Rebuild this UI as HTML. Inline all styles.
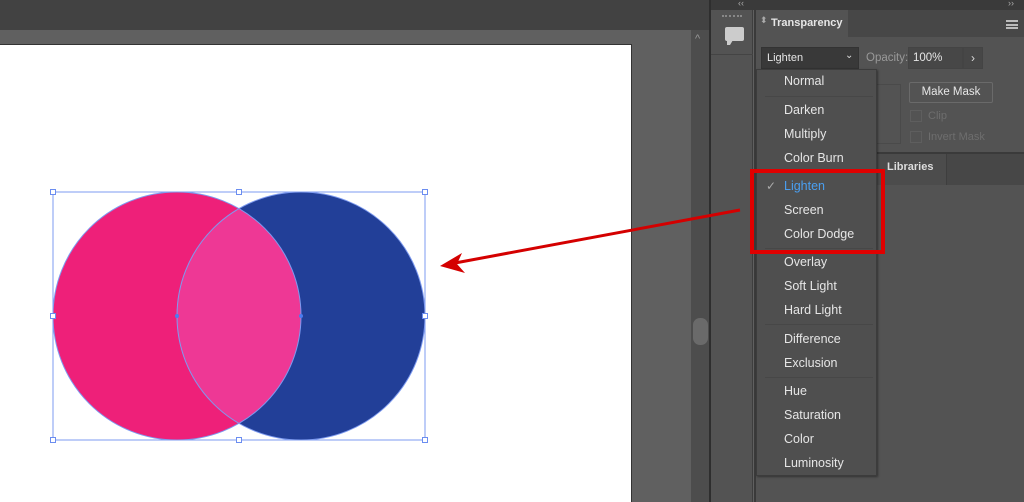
<!DOCTYPE html>
<html><head><style>
*{margin:0;padding:0;box-sizing:border-box}
body{width:1024px;height:502px;overflow:hidden;background:#606060;font-family:"Liberation Sans",sans-serif;position:relative}
.a{position:absolute}
.mi{position:absolute;left:784px;font-size:12.5px;color:#e6e6e6}
.sep{position:absolute;left:765px;width:108px;height:1px;background:#474747}
</style></head><body>
<div class="a" style="left:0;top:0;width:710px;height:30px;background:#424242"></div>
<div class="a" style="left:0;top:44px;width:632px;height:458px;background:#fff;border-top:1px solid #333;border-right:1px solid #333"></div>
<div class="a" style="left:691px;top:30px;width:18px;height:472px;background:#4d4d4d"></div>
<div class="a" style="left:693px;top:318px;width:15px;height:27px;background:#6a6a6a;border-radius:7px"></div>
<div class="a" style="left:695px;top:33px;color:#999;font-size:11px">^</div>
<div class="a" style="left:709px;top:0;width:2px;height:502px;background:#2e2e2e"></div>
<div class="a" style="left:711px;top:0;width:313px;height:10px;background:#3a3a3a"></div>
<div class="a" style="left:738px;top:-2px;color:#aaa;font-size:9px">‹‹</div>
<div class="a" style="left:1008px;top:-2px;color:#aaa;font-size:9px">››</div>
<div class="a" style="left:711px;top:10px;width:42px;height:492px;background:#535353;border-right:1px solid #3e3e3e"></div>
<div class="a" style="left:711px;top:10px;width:42px;height:45px;border-bottom:1px solid #444"></div>
<div class="a" style="left:722px;top:15px;width:20px;height:2px;border-top:2px dotted #888"></div>
<div class="a" style="left:725px;top:27px;width:19px;height:14px;background:#ccc;border-radius:2px"></div>
<div class="a" style="left:727px;top:40px;width:0;height:0;border-left:3px solid #ccc;border-right:3px solid transparent;border-top:5px solid #ccc"></div>
<div class="a" style="left:754px;top:10px;width:2px;height:492px;background:#3a3a3a"></div>
<div class="a" style="left:756px;top:10px;width:268px;height:27px;background:#474747"></div>
<div class="a" style="left:756px;top:10px;width:92px;height:27px;background:#535353"></div>
<div class="a" style="left:760px;top:15px;color:#aaa;font-size:9px">⬍</div>
<div class="a" style="left:771px;top:17px;color:#e6e6e6;font-size:11px;font-weight:bold">Transparency</div>
<div class="a" style="left:1006px;top:20px;width:12px;height:9px;border-top:2px solid #bbb;border-bottom:2px solid #bbb"></div>
<div class="a" style="left:1006px;top:24px;width:12px;height:2px;background:#bbb"></div>
<div class="a" style="left:756px;top:37px;width:268px;height:115px;background:#535353"></div>
<div class="a" style="left:756px;top:152px;width:268px;height:33px;background:#474747;border-top:2px solid #3a3a3a"></div>
<div class="a" style="left:877px;top:154px;width:70px;height:31px;background:#4c4c4c;border-right:1px solid #3e3e3e"></div>
<div class="a" style="left:887px;top:161px;color:#ddd;font-size:11px;font-weight:bold">Libraries</div>
<div class="a" style="left:756px;top:185px;width:268px;height:317px;background:#535353"></div>
<div class="a" style="left:761px;top:47px;width:98px;height:22px;background:#393939;border:1px solid #333"></div>
<div class="a" style="left:767px;top:52px;color:#e6e6e6;font-size:11px">Lighten</div>
<div class="a" style="left:845px;top:50px;color:#ddd;font-size:10px">⌄</div>
<div class="a" style="left:866px;top:52px;color:#999;font-size:11.5px">Opacity:</div>
<div class="a" style="left:908px;top:47px;width:55px;height:22px;background:#474747;border:1px solid #444"></div>
<div class="a" style="left:913px;top:52px;color:#e6e6e6;font-size:11.5px">100%</div>
<div class="a" style="left:963px;top:47px;width:20px;height:22px;background:#474747;border:1px solid #444;color:#ddd;font-size:12px;text-align:center;line-height:20px">›</div>
<div class="a" style="left:855px;top:84px;width:46px;height:60px;border:1px solid #4a4a4a"></div>
<div class="a" style="left:909px;top:82px;width:84px;height:21px;border:1px solid #6a6a6a;border-radius:2px;color:#e6e6e6;font-size:11.5px;text-align:center;line-height:19px">Make Mask</div>
<div class="a" style="left:910px;top:110px;width:12px;height:12px;border:1px solid #5e5e5e"></div>
<div class="a" style="left:928px;top:110px;color:#6e6e6e;font-size:11px">Clip</div>
<div class="a" style="left:910px;top:131px;width:12px;height:12px;border:1px solid #5e5e5e"></div>
<div class="a" style="left:928px;top:131px;color:#6e6e6e;font-size:11px">Invert Mask</div>
<div class="a" style="left:756px;top:69px;width:121px;height:407px;background:#4f4f4f;border:1px solid #3c3c3c;box-shadow:1px 1px 2px rgba(0,0,0,.4)"></div>
<div class="mi" style="top:74px">Normal</div>
<div class="sep" style="top:96px"></div>
<div class="mi" style="top:103px">Darken</div>
<div class="mi" style="top:127px">Multiply</div>
<div class="mi" style="top:151px">Color Burn</div>
<div class="sep" style="top:172px"></div>
<div class="a" style="left:766px;top:179px;color:#aaa;font-size:12px">✓</div>
<div class="mi" style="top:179px;color:#4a9ff0">Lighten</div>
<div class="mi" style="top:203px">Screen</div>
<div class="mi" style="top:227px">Color Dodge</div>
<div class="sep" style="top:248px"></div>
<div class="mi" style="top:255px">Overlay</div>
<div class="mi" style="top:279px">Soft Light</div>
<div class="mi" style="top:303px">Hard Light</div>
<div class="sep" style="top:324px"></div>
<div class="mi" style="top:332px">Difference</div>
<div class="mi" style="top:356px">Exclusion</div>
<div class="sep" style="top:377px"></div>
<div class="mi" style="top:384px">Hue</div>
<div class="mi" style="top:408px">Saturation</div>
<div class="mi" style="top:432px">Color</div>
<div class="mi" style="top:456px">Luminosity</div>
<div class="a" style="left:750px;top:169px;width:135px;height:85px;border:4px solid #e00000"></div>
<svg class="a" style="left:0;top:0" width="1024" height="502">
<defs><clipPath id="c"><circle cx="177" cy="316" r="124"/></clipPath></defs>
<circle cx="177" cy="316" r="124" fill="#ee2079"/>
<circle cx="301" cy="316" r="124" fill="#223f98"/>
<circle cx="301" cy="316" r="124" fill="#ee3895" clip-path="url(#c)"/>
<circle cx="177" cy="316" r="124" fill="none" stroke="#7e9bf0" stroke-width="1"/>
<circle cx="301" cy="316" r="124" fill="none" stroke="#7e9bf0" stroke-width="1"/>
<rect x="53" y="192" width="372" height="248" fill="none" stroke="#7e9bf0" stroke-width="1"/>
<g fill="#fff" stroke="#6b8df0">
<rect x="50.5" y="189.5" width="5" height="5"/><rect x="236.5" y="189.5" width="5" height="5"/><rect x="422.5" y="189.5" width="5" height="5"/>
<rect x="50.5" y="313.5" width="5" height="5"/><rect x="422.5" y="313.5" width="5" height="5"/>
<rect x="50.5" y="437.5" width="5" height="5"/><rect x="236.5" y="437.5" width="5" height="5"/><rect x="422.5" y="437.5" width="5" height="5"/>
</g>
<circle cx="177" cy="316" r="2" fill="#4a7cf0"/><circle cx="301" cy="316" r="2" fill="#4a7cf0"/>
<line x1="740" y1="210" x2="455" y2="263" stroke="#d40000" stroke-width="3"/>
<path d="M440 266 L462 253 L457 264 L465 273 Z" fill="#d40000"/>
</svg>
</body></html>
